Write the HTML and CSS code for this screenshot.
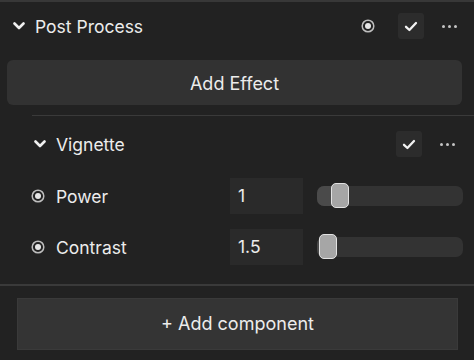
FILE: index.html
```html
<!DOCTYPE html>
<html lang="en">
<head>
    <meta charset="UTF-8">
    <title>Inspector</title>
    <link rel="stylesheet" href="styles.css">
</head>
<body>
    <div class="panel">
        <!-- Post Process header -->
        <div class="header">
            <svg class="chevron" width="12" height="8" viewBox="0 0 12 8"><path d="M1.5 1.5 L6 6 L10.5 1.5" fill="none" stroke="#f0f0f0" stroke-width="2.6" stroke-linecap="round" stroke-linejoin="round"/></svg>
            <span class="title">Post Process</span>
            <div class="tools">
                <svg class="radio" width="14" height="14" viewBox="0 0 14 14"><circle cx="7" cy="7" r="5.8" fill="none" stroke="#bdbdbd" stroke-width="1.5"/><circle cx="7" cy="7" r="3" fill="#e6e6e6"/></svg>
                <span class="check-box"><svg width="14" height="11" viewBox="0 0 14 11"><path d="M2 5.8 L5.4 9 L12 2" fill="none" stroke="#f2f2f2" stroke-width="2.3" stroke-linecap="round" stroke-linejoin="round"/></svg></span>
                <span class="dots"><i></i><i></i><i></i></span>
            </div>
        </div>

        <div class="add-effect">Add Effect</div>

        <!-- Vignette -->
        <div class="effect">
            <div class="header sub">
                <svg class="chevron" width="12" height="8" viewBox="0 0 12 8"><path d="M1.5 1.5 L6 6 L10.5 1.5" fill="none" stroke="#f0f0f0" stroke-width="2.6" stroke-linecap="round" stroke-linejoin="round"/></svg>
                <span class="title">Vignette</span>
                <div class="tools">
                    <span class="check-box"><svg width="14" height="11" viewBox="0 0 14 11"><path d="M2 5.8 L5.4 9 L12 2" fill="none" stroke="#f2f2f2" stroke-width="2.3" stroke-linecap="round" stroke-linejoin="round"/></svg></span>
                    <span class="dots"><i></i><i></i><i></i></span>
                </div>
            </div>

            <div class="prop">
                <svg class="radio" width="14" height="14" viewBox="0 0 14 14"><circle cx="7" cy="7" r="5.8" fill="none" stroke="#bdbdbd" stroke-width="1.5"/><circle cx="7" cy="7" r="3" fill="#e6e6e6"/></svg>
                <span class="label">Power</span>
                <div class="value">1</div>
                <div class="slider">
                    <div class="fill" style="width: 23px"></div>
                    <div class="thumb" style="left: 14px"></div>
                </div>
            </div>

            <div class="prop">
                <svg class="radio" width="14" height="14" viewBox="0 0 14 14"><circle cx="7" cy="7" r="5.8" fill="none" stroke="#bdbdbd" stroke-width="1.5"/><circle cx="7" cy="7" r="3" fill="#e6e6e6"/></svg>
                <span class="label">Contrast</span>
                <div class="value">1.5</div>
                <div class="slider">
                    <div class="fill" style="width: 8px"></div>
                    <div class="thumb" style="left: 2px"></div>
                </div>
            </div>
        </div>

        <div class="divider"></div>

        <div class="add-component">+ Add component</div>
    </div>
</body>
</html>
```

FILE: styles.css
```css
body {
    margin: 0;
    background-color: #222222;
    font-family: Inter, "Noto Sans", sans-serif;
    color: #ececec;
}
.panel {
    border-top: 2px solid #383838;
    height: 358px;
    overflow: hidden;
}
.header {
    display: flex;
    align-items: center;
    height: 48px;
    padding-left: 13px;
    padding-right: 17px;
}
.header .chevron {
    margin-right: 10px;
}
.title {
    font-size: 17.5px;
}
.tools {
    margin-left: auto;
    display: flex;
    align-items: center;
}
.header .radio {
    margin-right: 23px;
}
.check-box {
    display: flex;
    align-items: center;
    justify-content: center;
    width: 26px;
    height: 26px;
    background-color: #2c2c2c;
    border-radius: 3px;
}
.dots {
    display: flex;
    gap: 3px;
    margin-left: 18px;
}
.dots i {
    width: 3px;
    height: 3px;
    border-radius: 50%;
    background-color: #c4c4c4;
}
.add-effect {
    margin: 10px 12px 0 7px;
    height: 45px;
    line-height: 48px;
    text-align: center;
    font-size: 18px;
    background-color: #323232;
    border-radius: 6px;
}
.effect {
    margin-top: 10px;
    margin-left: 32px;
    border-top: 1px solid #3a3a3a;
    padding-bottom: 19px;
}
.header.sub {
    height: 56px;
    padding-left: 2px;
    padding-right: 19px;
}
.prop {
    display: flex;
    align-items: center;
    height: 36px;
    margin-top: 6px;
}
.prop + .prop {
    margin-top: 15px;
}
.prop .radio {
    margin-left: -1px;
    margin-right: 11px;
}
.label {
    font-size: 17.5px;
    width: 174px;
}
.value {
    width: 65px;
    height: 36px;
    line-height: 36px;
    padding-left: 8px;
    background-color: #2a2a2a;
    font-size: 17.5px;
}
.slider {
    position: relative;
    margin-left: 14px;
    width: 146px;
    height: 20px;
    background-color: #333333;
    border-radius: 7px;
}
.fill {
    height: 20px;
    background-color: #4a4a4a;
    border-radius: 7px 0 0 7px;
}
.thumb {
    position: absolute;
    top: -3px;
    width: 16px;
    height: 23px;
    background-color: #a6a6a6;
    border: 1.5px solid #e2e2e2;
    border-radius: 5px;
}
.divider {
    height: 2px;
    background-color: #3a3a3a;
}
.add-component {
    margin: 12px 16px 0 17px;
    height: 50px;
    line-height: 50px;
    text-align: center;
    font-size: 18px;
    background-color: #343434;
    border: 1px solid #3a3a3a;
}
```
